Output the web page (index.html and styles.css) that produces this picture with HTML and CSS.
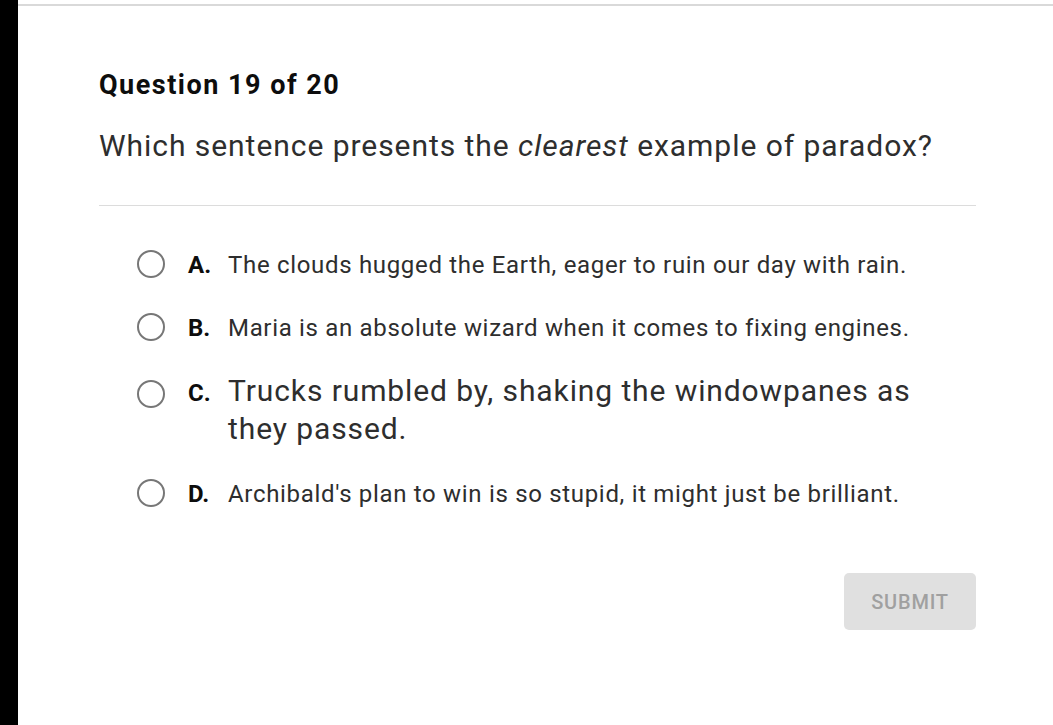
FILE: index.html
```html
<!DOCTYPE html>
<html>
<head>
<meta charset="utf-8">
<link rel="stylesheet" href="styles.css">
</head>
<body>
<div class="frame">
  <div class="sidebar"></div>
  <div class="main">
    <div class="topline"></div>
    <div class="content">
      <h2 class="qnum">Question 19 of 20</h2>
      <p class="qtext">Which sentence presents the <em>clearest</em> example of paradox?</p>
      <div class="divider"></div>
      <div class="options">
        <div class="option">
          <span class="radio"></span>
          <div class="label">
            <span class="letter">A.</span>
            <span class="otext">The clouds hugged the Earth, eager to ruin our day with rain.</span>
          </div>
        </div>
        <div class="option">
          <span class="radio"></span>
          <div class="label">
            <span class="letter">B.</span>
            <span class="otext">Maria is an absolute wizard when it comes to fixing engines.</span>
          </div>
        </div>
        <div class="option big">
          <span class="radio"></span>
          <div class="label">
            <span class="letter">C.</span>
            <span class="otext">Trucks rumbled by, shaking the windowpanes as they passed.</span>
          </div>
        </div>
        <div class="option last">
          <span class="radio"></span>
          <div class="label">
            <span class="letter">D.</span>
            <span class="otext">Archibald's plan to win is so stupid, it might just be brilliant.</span>
          </div>
        </div>
      </div>
      <div class="actions">
        <button class="submit">SUBMIT</button>
      </div>
    </div>
  </div>
</div>
</body>
</html>
```

FILE: styles.css
```css
html, body {
  margin: 0;
  padding: 0;
  background: #fff;
}
body {
  font-family: Roboto, "Liberation Sans", sans-serif;
  color: #222;
}
.frame {
  display: flex;
  width: 1053px;
  height: 725px;
  overflow: hidden;
}
.sidebar {
  width: 18px;
  flex: none;
  background: #000;
}
.main {
  flex: 1;
  padding-top: 4px;
}
.topline {
  height: 2px;
  background: #d9d9d9;
}
.content {
  padding-left: 81px;
  width: 877px;
}
.qnum {
  margin: 64px 0 0;
  font-size: 27px;
  font-weight: 700;
  line-height: 30px;
  letter-spacing: 1.5px;
  color: #0d0d0d;
}
.qtext {
  margin: 28px 0 0;
  font-size: 30px;
  line-height: 36px;
  letter-spacing: 0.95px;
  color: #2e2e2e;
}
.qtext em {
  font-style: italic;
}
.divider {
  margin-top: 41px;
  height: 1px;
  background: #dcdcdc;
}
.options {
  margin-top: 45px;
  padding-left: 38px;
  display: flex;
  flex-direction: column;
  gap: 35px;
}
.option {
  display: flex;
  align-items: flex-start;
  font-size: 24px;
  line-height: 28px;
  letter-spacing: 0.68px;
  color: #2e2e2e;
}
.radio {
  flex: none;
  box-sizing: border-box;
  width: 28px;
  height: 28px;
  border: 2.5px solid #777;
  border-radius: 50%;
  margin-top: -1px;
  margin-right: 23px;
}
.label {
  display: flex;
  align-items: baseline;
}
.letter {
  flex: none;
  width: 40px;
  font-size: 24px;
  font-weight: 700;
  letter-spacing: 0;
  color: #0d0d0d;
}
.option.big {
  margin-top: -5px;
  font-size: 30px;
  line-height: 38px;
  letter-spacing: 0.9px;
}
.option.big .otext {
  width: 700px;
}
.option.big .radio {
  margin-top: 8px;
}
.option.last {
  margin-top: -3px;
}
.actions {
  margin-top: 65px;
  display: flex;
  justify-content: flex-end;
}
.submit {
  width: 132px;
  height: 57px;
  background: #e0e0e0;
  border: none;
  border-radius: 5px;
  color: #a0a0a0;
  font-family: Roboto, "Liberation Sans", sans-serif;
  font-size: 20px;
  font-weight: 500;
  letter-spacing: 0.8px;
}
```
